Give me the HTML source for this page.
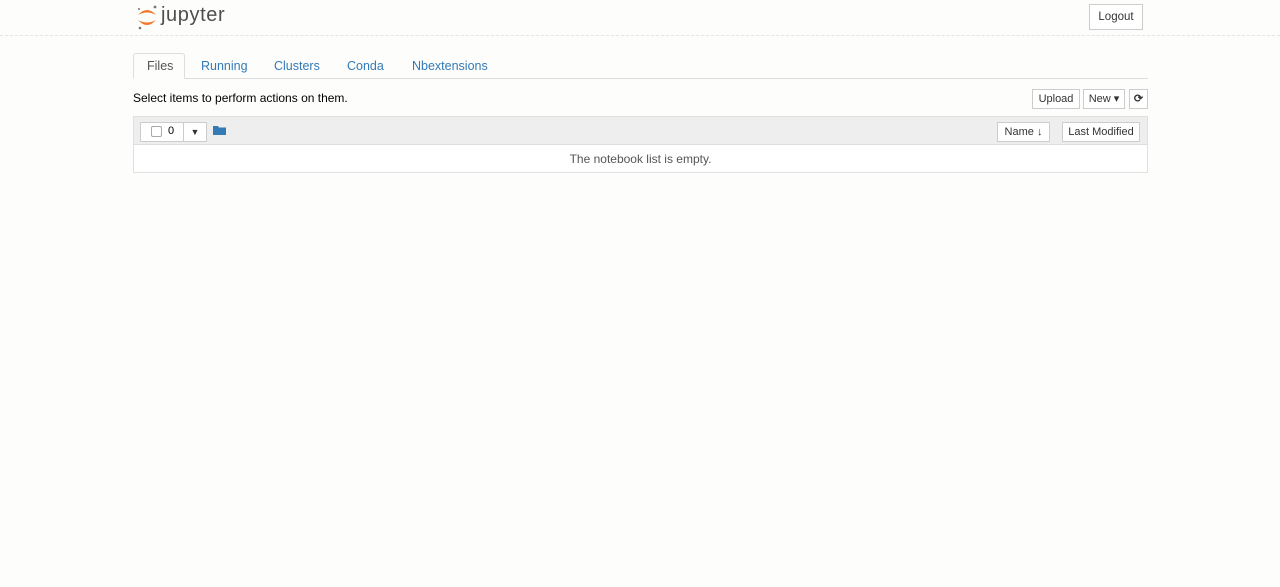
<!DOCTYPE html>
<html><head><meta charset="utf-8"><style>
*{box-sizing:border-box}
body{margin:0;background:#fdfdfb;font-family:"Liberation Sans",sans-serif;font-size:12px;color:#000;width:1280px;height:587px;overflow:hidden;position:relative}
.abs{position:absolute}
.hdr{left:0;top:35px;width:1280px;border-top:1px dashed #e4e4e4}
.btn{position:absolute;border:1px solid #ccc;background:#fff;height:20px;line-height:18px;font-size:11px;text-align:center;color:#333}
.tab{position:absolute;top:59px;font-size:12.5px;color:#337ab7}
</style></head><body>
<svg class="abs" style="left:136px;top:3px" width="24" height="28" viewBox="0 0 24 28">
<path d="M2 12 Q11 2 20 12 Q11 7 2 12Z" fill="#f37726"/>
<path d="M2 17 Q11 27 20 17 Q11 22 2 17Z" fill="#f37726"/>
<circle cx="19" cy="4" r="1.4" fill="#767677"/><circle cx="3" cy="6" r="1" fill="#767677"/><circle cx="4" cy="25" r="1.3" fill="#767677"/>
</svg>
<div class="abs" style="left:161px;top:4px;font-size:20px;color:#4e4e4e;letter-spacing:0.6px">jupyter</div>
<div class="btn" style="left:1089px;top:4px;width:54px;height:26px;line-height:24px;font-size:11.5px">Logout</div>
<div class="abs hdr"></div>
<div class="abs" style="left:133px;top:78px;width:1015px;border-top:1px solid #ddd"></div>
<div class="abs" style="left:133px;top:53px;width:52px;height:26px;border:1px solid #ddd;border-bottom:1px solid #fdfdfb;background:#fdfdfb;border-radius:3px 3px 0 0"></div>
<div class="tab" style="left:147px;color:#555">Files</div>
<div class="tab" style="left:201px">Running</div>
<div class="tab" style="left:274px">Clusters</div>
<div class="tab" style="left:347px">Conda</div>
<div class="tab" style="left:412px">Nbextensions</div>
<div class="abs" style="left:133px;top:91px;font-size:12px">Select items to perform actions on them.</div>
<div class="btn" style="left:1032px;top:89px;width:48px">Upload</div>
<div class="btn" style="left:1083px;top:89px;width:42px">New ▾</div>
<div class="btn" style="left:1129px;top:89px;width:19px;font-weight:bold">⟳</div>
<div class="abs" style="left:133px;top:116px;width:1015px;height:57px;border:1px solid #e0e0e0;background:#fff"></div>
<div class="abs" style="left:134px;top:117px;width:1013px;height:28px;background:#eeeeee;border-bottom:1px solid #ddd"></div>
<div class="btn" style="left:140px;top:122px;width:44px"></div>
<div class="abs" style="left:151px;top:126px;width:11px;height:11px;border:1px solid #aaa;border-radius:2px;background:#fff"></div>
<div class="abs" style="left:168px;top:125px;font-size:11px">0</div>
<div class="btn" style="left:183px;top:122px;width:24px;font-size:9px">▼</div>
<svg class="abs" style="left:213px;top:125px" width="13" height="10" viewBox="0 0 13 10"><path d="M0 1h5l1 1.5h7V10H0Z" fill="#337ab7"/></svg>
<div class="btn" style="left:997px;top:122px;width:53px">Name <b>↓</b></div>
<div class="btn" style="left:1062px;top:122px;width:78px">Last Modified</div>
<div class="abs" style="left:133px;top:152px;width:1015px;text-align:center;color:#555;font-size:12px">The notebook list is empty.</div>
</body></html>
